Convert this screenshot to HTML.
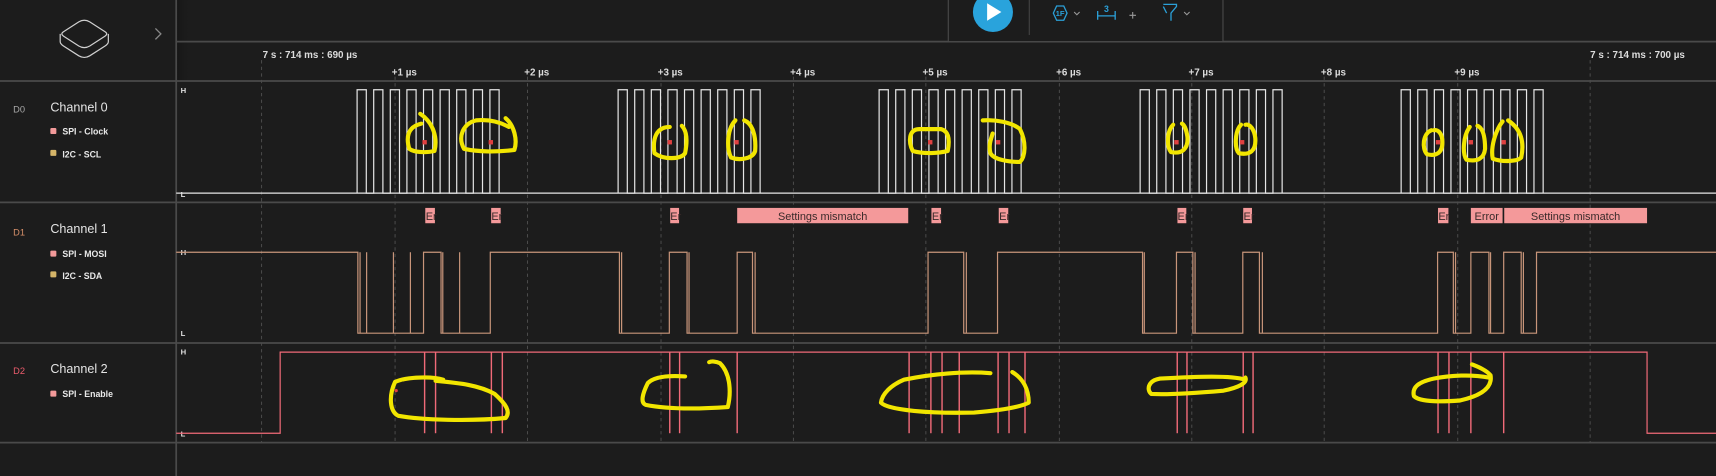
<!DOCTYPE html>
<html><head><meta charset="utf-8"><style>
html,body{margin:0;padding:0;background:#1c1c1c;overflow:hidden}
svg{display:block}
text{font-family:"Liberation Sans",sans-serif}
</style></head><body>
<svg width="1716" height="476" viewBox="0 0 1568 435" preserveAspectRatio="none" xmlns="http://www.w3.org/2000/svg">
<defs>
<path id="burst" d="M0,176.5 v-94.5 h8.4 v94.5 h6.77 v-94.5 h8.4 v94.5 h6.77 v-94.5 h8.4 v94.5 h6.77 v-94.5 h8.4 v94.5 h6.77 v-94.5 h8.4 v94.5 h6.77 v-94.5 h8.4 v94.5 h6.77 v-94.5 h8.4 v94.5 h6.77 v-94.5 h8.4 v94.5 h6.77 v-94.5 h8.4 v94.5" fill="none" stroke="#e6e6e6" stroke-width="1.1"/>
<linearGradient id="sh" x1="0" x2="1"><stop offset="0" stop-color="#111" stop-opacity=".6"/><stop offset="1" stop-color="#1c1c1c" stop-opacity="0"/></linearGradient>
</defs>
<rect width="1568" height="435" fill="#1c1c1c"/>
<rect x="161" y="0" width="14" height="74" fill="url(#sh)"/>
<!-- grid lines -->
<g stroke="#4a4a4a" stroke-width="1.6">
<line x1="161" y1="0" x2="161" y2="435"/>
<line x1="161" y1="38" x2="1568" y2="38"/>
<line x1="0" y1="74" x2="1568" y2="74"/>
<line x1="0" y1="185" x2="1568" y2="185"/>
<line x1="0" y1="313.5" x2="1568" y2="313.5"/>
<line x1="0" y1="404.5" x2="1568" y2="404.5"/>
</g>
<g stroke="#4c4c4c" stroke-width="0.9" stroke-dasharray="3,3">
<line x1="239" y1="55" x2="239" y2="404"/>
<line x1="361" y1="70" x2="361" y2="404"/>
<line x1="482" y1="70" x2="482" y2="404"/>
<line x1="604" y1="70" x2="604" y2="404"/>
<line x1="725" y1="70" x2="725" y2="404"/>
<line x1="846" y1="70" x2="846" y2="404"/>
<line x1="968" y1="70" x2="968" y2="404"/>
<line x1="1089" y1="70" x2="1089" y2="404"/>
<line x1="1210" y1="70" x2="1210" y2="404"/>
<line x1="1332" y1="70" x2="1332" y2="404"/>
<line x1="1453" y1="55" x2="1453" y2="404"/>
</g>
<!-- time labels -->
<g fill="#dcdcdc" font-size="9" font-weight="bold">
<text x="240" y="53">7 s : 714 ms : 690 µs</text>
<text x="1453" y="53">7 s : 714 ms : 700 µs</text>
<text x="358" y="69">+1 µs</text>
<text x="479" y="69">+2 µs</text>
<text x="601" y="69">+3 µs</text>
<text x="722" y="69">+4 µs</text>
<text x="843" y="69">+5 µs</text>
<text x="965" y="69">+6 µs</text>
<text x="1086" y="69">+7 µs</text>
<text x="1207" y="69">+8 µs</text>
<text x="1329" y="69">+9 µs</text>
</g>
<!-- sidebar logo -->
<g fill="none" stroke="#d0d0d0" stroke-width="1.1" stroke-linejoin="round">
<path d="M58,29 L72,20 Q77,17 82,20 L96,29 Q99,31 96,33 L82,42 Q77,45 72,42 L58,33 Q55,31 58,29 Z"/>
<path d="M55,31 V38 Q55,40 58,42 L72,51 Q77,54 82,51 L96,42 Q99,40 99,38 V31"/>
</g>
<path d="M142,26 L147,31 L142,36" fill="none" stroke="#888" stroke-width="1.2"/>
<!-- channel labels -->
<g font-size="8.5" >
<text x="12" y="103" fill="#a8a8a8">D0</text>
<text x="12" y="215" fill="#d8906a">D1</text>
<text x="12" y="342" fill="#ec5c6c">D2</text>
</g>
<g font-size="11.5" fill="#e4e4e4">
<text x="46" y="102">Channel 0</text>
<text x="46" y="213">Channel 1</text>
<text x="46" y="341">Channel 2</text>
</g>
<g font-size="8" font-weight="bold" fill="#e8e8e8">
<rect x="46" y="117" width="5.5" height="5.5" rx="1" fill="#f29a9a"/><text x="57" y="123">SPI - Clock</text>
<rect x="46" y="137" width="5.5" height="5.5" rx="1" fill="#d4b468"/><text x="57" y="144">I2C - SCL</text>
<rect x="46" y="229" width="5.5" height="5.5" rx="1" fill="#f29a9a"/><text x="57" y="235">SPI - MOSI</text>
<rect x="46" y="248" width="5.5" height="5.5" rx="1" fill="#d4b468"/><text x="57" y="255">I2C - SDA</text>
<rect x="46" y="357" width="5.5" height="5.5" rx="1" fill="#f29a9a"/><text x="57" y="363">SPI - Enable</text>
</g>
<!-- H/L -->
<g font-size="7" font-weight="bold" fill="#e0e0e0">
<text x="165" y="85">H</text><text x="165" y="180">L</text>
<text x="165" y="233">H</text><text x="165" y="307">L</text>
<text x="165" y="324">H</text><text x="165" y="399">L</text>
</g>
<!-- channel 0 -->
<line x1="161" y1="176.5" x2="1568" y2="176.5" stroke="#e6e6e6" stroke-width="1.1"/>
<use href="#burst" x="326.3"/>
<use href="#burst" x="564.8"/>
<use href="#burst" x="803.3"/>
<use href="#burst" x="1041.8"/>
<use href="#burst" x="1280.3"/>
<g fill="#e04040">
<rect x="386" y="128" width="4" height="4"/><rect x="446.5" y="128" width="4" height="4"/>
<rect x="610" y="128" width="4" height="4"/><rect x="671" y="128" width="4" height="4"/>
<rect x="848" y="128" width="4" height="4"/><rect x="910" y="128" width="4" height="4"/>
<rect x="1073" y="128" width="4" height="4"/><rect x="1133" y="128" width="4" height="4"/>
<rect x="1312" y="128" width="4" height="4"/><rect x="1342" y="128" width="4" height="4"/><rect x="1372" y="128" width="4" height="4"/>
</g>
<!-- channel 1 -->
<path d="M161,230.5 H327 V304.5 H387 V230.5 H403 V304.5 H448 V230.5 H566 V304.5 H611.6 V230.5 H627.8 V304.5 H673.6 V230.5 H687.6 V304.5 H848 V230.5 H880.6 V304.5 H911.5 V230.5 H1044 V304.5 H1075 V230.5 H1090 V304.5 H1135.6 V230.5 H1150.8 V304.5 H1313.6 V230.5 H1328 V304.5 H1344 V230.5 H1360.5 V304.5 H1374 V230.5 H1390 V304.5 H1404 V230.5 H1568" fill="none" stroke="#c8957a" stroke-width="1.1"/>
<g stroke="#c8957a" stroke-width="1.1">
<line x1="329" y1="230.5" x2="329" y2="304.5"/><line x1="335" y1="230.5" x2="335" y2="304.5"/>
<line x1="359.5" y1="230.5" x2="359.5" y2="304.5"/><line x1="375" y1="230.5" x2="375" y2="304.5"/>
<line x1="404.6" y1="230.5" x2="404.6" y2="304.5"/><line x1="420" y1="230.5" x2="420" y2="304.5"/>
<line x1="568" y1="230.5" x2="568" y2="304.5"/><line x1="629.6" y1="230.5" x2="629.6" y2="304.5"/>
<line x1="690" y1="230.5" x2="690" y2="304.5"/><line x1="883" y1="230.5" x2="883" y2="304.5"/>
<line x1="1045.6" y1="230.5" x2="1045.6" y2="304.5"/><line x1="1092" y1="230.5" x2="1092" y2="304.5"/>
<line x1="1153.5" y1="230.5" x2="1153.5" y2="304.5"/><line x1="1330" y1="230.5" x2="1330" y2="304.5"/>
<line x1="1362" y1="230.5" x2="1362" y2="304.5"/><line x1="1392" y1="230.5" x2="1392" y2="304.5"/>
</g>
<!-- error labels -->
<g fill="#f4999a">
<rect x="388.6" y="190" width="8.8" height="14"/><rect x="448.8" y="190" width="8.7" height="14"/>
<rect x="612.4" y="190" width="8.1" height="14"/><rect x="673.6" y="190" width="156.3" height="14"/>
<rect x="851.1" y="190" width="8.8" height="14"/><rect x="912.6" y="190" width="8.7" height="14"/>
<rect x="1075.9" y="190" width="8.1" height="14"/><rect x="1136" y="190" width="8" height="14"/>
<rect x="1314" y="190" width="9.5" height="14"/><rect x="1344" y="190" width="29" height="14"/>
<rect x="1374.5" y="190" width="130.5" height="14"/>
</g>
<g font-size="10" fill="#3a2a2a">
<text x="389" y="201">Er</text><text x="449" y="201">Er</text><text x="612.5" y="201">Er</text>
<text x="851.5" y="201">Er</text><text x="913" y="201">Er</text><text x="1076" y="201">Er</text>
<text x="1136.3" y="201">Er</text><text x="1314.3" y="201">Er</text>
<text x="751.7" y="201" text-anchor="middle">Settings mismatch</text>
<text x="1358.5" y="201" text-anchor="middle">Error</text>
<text x="1439.7" y="201" text-anchor="middle">Settings mismatch</text>
</g>
<!-- channel 2 -->
<path d="M161,395.9 H256 V321.8 H1505 V395.9 H1568" fill="none" stroke="#f06a78" stroke-width="1.1"/>
<g stroke="#f06a78" stroke-width="1.3">
<line x1="388" y1="321.8" x2="388" y2="395.9"/><line x1="398" y1="321.8" x2="398" y2="395.9"/>
<line x1="449" y1="321.8" x2="449" y2="395.9"/><line x1="459" y1="321.8" x2="459" y2="395.9"/>
<line x1="612" y1="321.8" x2="612" y2="395.9"/><line x1="621" y1="321.8" x2="621" y2="395.9"/>
<line x1="673.6" y1="321.8" x2="673.6" y2="395.9"/><line x1="830.7" y1="321.8" x2="830.7" y2="395.9"/>
<line x1="850.6" y1="321.8" x2="850.6" y2="395.9"/><line x1="860.8" y1="321.8" x2="860.8" y2="395.9"/>
<line x1="876.5" y1="321.8" x2="876.5" y2="395.9"/><line x1="912" y1="321.8" x2="912" y2="395.9"/>
<line x1="922" y1="321.8" x2="922" y2="395.9"/><line x1="936.6" y1="321.8" x2="936.6" y2="395.9"/>
<line x1="1075.7" y1="321.8" x2="1075.7" y2="395.9"/><line x1="1084.6" y1="321.8" x2="1084.6" y2="395.9"/>
<line x1="1136" y1="321.8" x2="1136" y2="395.9"/><line x1="1145" y1="321.8" x2="1145" y2="395.9"/>
<line x1="1314" y1="321.8" x2="1314" y2="395.9"/><line x1="1324" y1="321.8" x2="1324" y2="395.9"/>
<line x1="1344" y1="321.8" x2="1344" y2="395.9"/><line x1="1374" y1="321.8" x2="1374" y2="395.9"/>
</g>
<circle cx="362" cy="357" r="1.5" fill="#e04040"/>
<!-- yellow annotations -->
<g fill="none" stroke="#f2e600" stroke-width="3.8" stroke-linecap="round" stroke-linejoin="round">
<path d="M384,104 C396,112 400,126 397,138 C388,140 378,139 374,136 C371,126 372,116 385,113"/>
<path d="M462,108 C470,115 473,128 470,137 C455,139 437,139 424,136 C418,125 423,113 435,110 C446,109 456,111 465,116"/>
<path d="M612,116 C600,116 596,126 598,140 C606,146 622,146 626,140 C628,130 628,120 623,115"/>
<path d="M672,110 C664,118 664,136 668,144 C676,147 688,145 690,138 C691,125 688,113 680,110"/>
<path d="M840,118 C830,118 830,130 834,138 C845,141 858,140 866,138 C868,128 867,120 860,118 Z"/>
<path d="M898,110 C910,109 925,112 932,118 C938,130 937,143 932,148 C922,148 908,146 905,140 C903,132 906,126 907,122"/>
<path d="M1072,114 C1066,120 1066,134 1070,139 C1080,141 1086,136 1085,125 C1084,118 1082,114 1080,113"/>
<path d="M1134,114 C1128,120 1128,136 1132,140 C1142,142 1148,138 1147,126 C1146,118 1142,113 1138,114"/>
<path d="M1308,119 C1300,122 1299,136 1304,141 C1312,143 1318,140 1318,130 C1318,122 1314,118 1310,119"/>
<path d="M1343,116 C1337,124 1336,140 1340,146 C1350,148 1356,145 1357,136 C1357,125 1355,117 1350,115"/>
<path d="M1373,111 C1366,120 1362,135 1364,145 C1372,148 1386,148 1390,144 C1393,130 1390,118 1378,110"/>
<path d="M405,347 C396,344 372,344 361,349 C355,362 356,376 364,380 C386,384 430,385 462,382 C467,376 462,369 452,360 C438,352 420,350 398,348"/>
<path d="M626,344 C612,343 598,344 592,350 C587,360 585,368 590,370 C610,374 636,374 665,372 C668,360 668,342 658,332 C654,330 650,330 648,331"/>
<path d="M905,341 C880,339 850,342 826,347 C814,352 806,360 805,368 C812,375 850,378 890,377 C915,375 932,372 940,368 C940,356 935,346 925,340"/>
<path d="M1138,347 C1125,343 1095,344 1060,346 C1048,348 1048,357 1052,360 C1070,361 1095,359 1118,357 C1132,354 1140,350 1138,345"/>
<path d="M1360,345 C1345,342 1325,343 1310,346 C1296,349 1290,354 1292,362 C1298,368 1320,367 1334,366 C1352,362 1364,355 1362,343 C1358,338 1350,335 1345,333"/>
</g>
<!-- toolbar popup -->
<rect x="866.5" y="-2" width="251" height="40" fill="#1c1c1c" stroke="#4a4a4a" stroke-width="1"/>
<circle cx="907.3" cy="11" r="18.3" fill="#29a3dc"/>
<path d="M902,3 L902,19 L915,11 Z" fill="#fff"/>
<line x1="940.5" y1="0" x2="940.5" y2="32" stroke="#444" stroke-width="1"/>
<g fill="none" stroke="#2ba0d8" stroke-width="1.2">
<path d="M962.5,12 L965.5,5.5 L972,5.5 L975,12 L972,18.5 L965.5,18.5 Z"/>
<path d="M1003,10 V18 M1003,14.5 H1019 M1019,10 V18"/>
<path d="M1063,4 H1075 V6 L1070,12 V19 M1066,12 L1063,6"/>
</g>
<text x="968.7" y="14.8" font-size="7" font-weight="bold" fill="#2ba0d8" text-anchor="middle">1F</text>
<text x="1011" y="11" font-size="8" font-weight="bold" fill="#2ba0d8" text-anchor="middle">3</text>
<g fill="none" stroke="#999" stroke-width="1">
<path d="M981.5,11 L984,13.5 L986.5,11"/>
<path d="M1082,11 L1084.5,13.5 L1087,11"/>
<path d="M1032,14 H1038 M1035,11 V17"/>
</g>
</svg>
</body></html>
